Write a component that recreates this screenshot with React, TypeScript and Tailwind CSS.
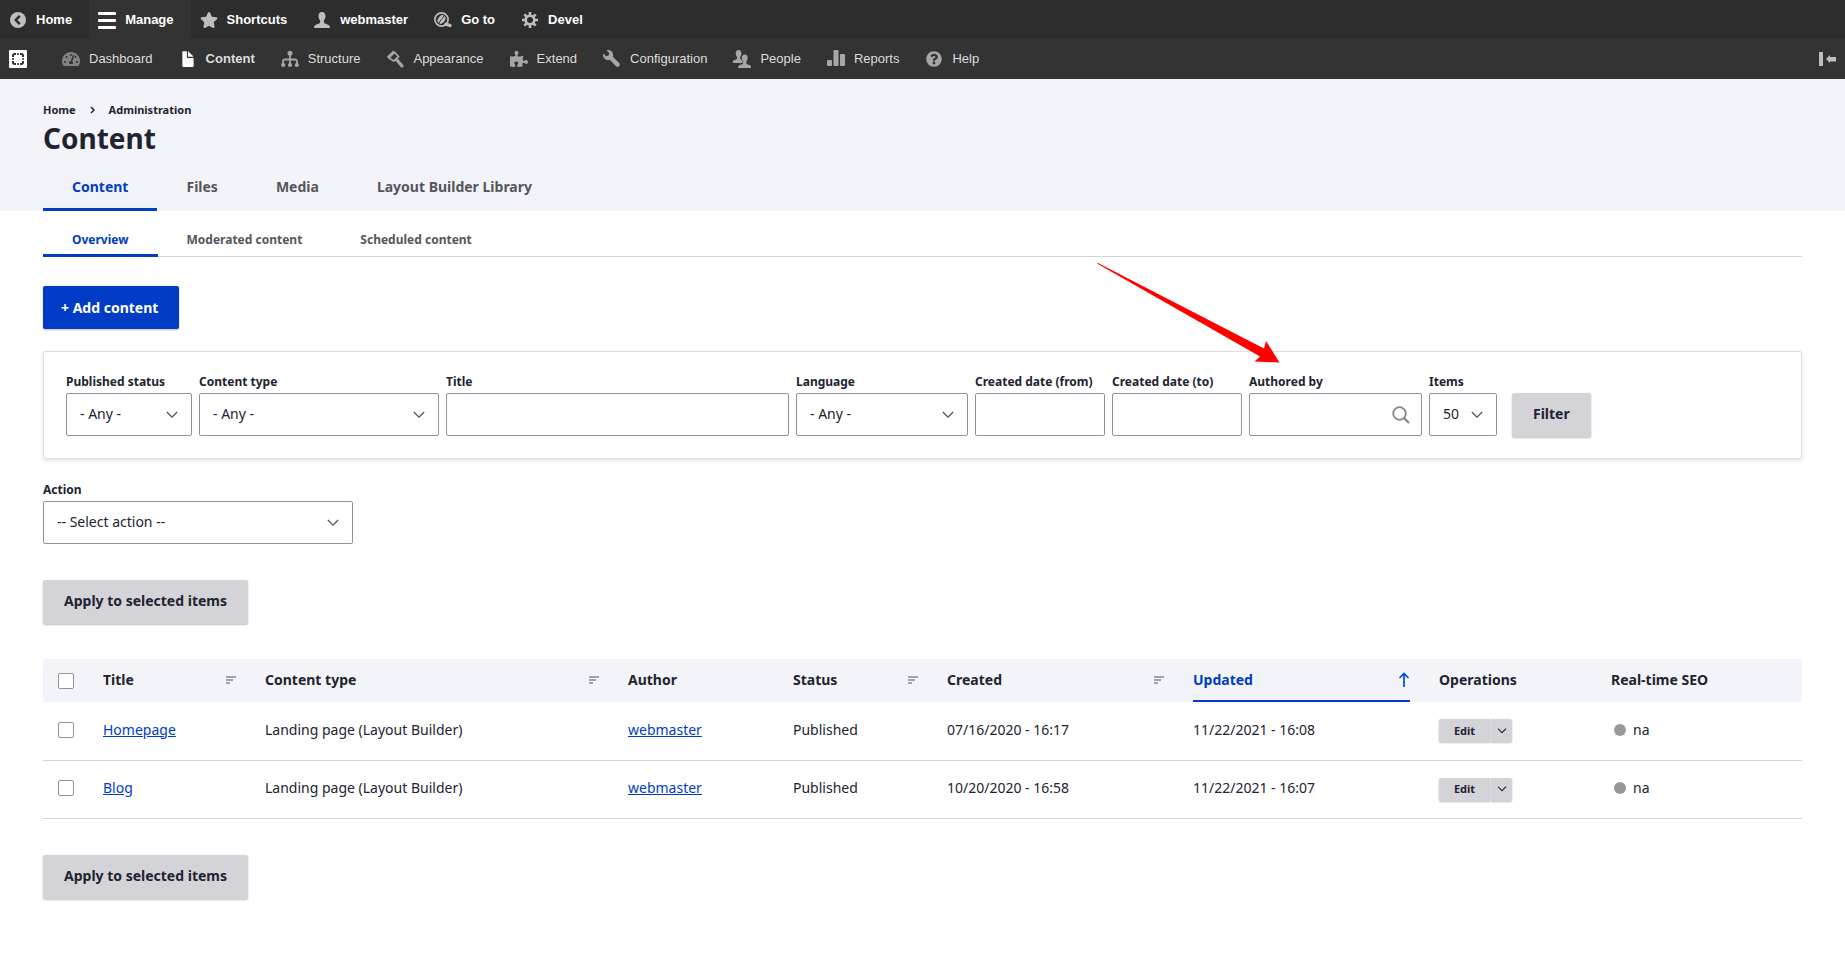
import React, { useId } from "react";
import { FaPuzzlePiece, FaQuestionCircle, FaStar, FaTachometerAlt } from "react-icons/fa";

const BackIcon = () => (
  <svg viewBox="0 0 16 16" className="size-4">
    <circle cx="8" cy="8" r="8" fill="#bebebe" />
    <path d="M9.800 3.800 5.700 8l4.100 4.200" fill="none" stroke="#2d2d2d" strokeWidth="2.400" />
  </svg>
);

const MenuIcon = () => (
  <svg viewBox="0 0 18 18" className="size-[18px]" fill="#fff">
    <rect y="1" width="18" height="3" rx="1" />
    <rect y="8" width="18" height="3" rx="1" />
    <rect y="15" width="18" height="3" rx="1" />
  </svg>
);

const personPath =
  "M8 0C5.500 0 4.400 1.900 4.500 4.300c.1 1.900.8 3.300 1.600 4.200v1.800c-.2 1-1.600 1.500-3 2C1.600 12.800.1 13.400 0 16h16c-.1-2.600-1.600-3.200-3.100-3.700-1.400-.5-2.800-1-3-2V8.500c.8-.9 1.500-2.300 1.600-4.200C11.600 1.900 10.500 0 8 0z";

const PersonIcon = () => (
  <svg viewBox="0 0 16 16" className="size-4" fill="#bebebe">
    <path d={personPath} />
  </svg>
);

const GoToIcon = () => (
  <svg viewBox="0 0 18 16" className="h-4 w-[18px]">
    <circle cx="7.500" cy="7.500" r="6.600" fill="none" stroke="#bebebe" strokeWidth="1.700" />
    <ellipse cx="7.500" cy="7.500" rx="3.400" ry="4.600" fill="#bebebe" transform="rotate(38 7.500 7.500)" />
    <path d="M9.800 4.100C9 6.500 6 8 5.200 10.900" fill="none" stroke="#2d2d2d" strokeWidth="1" />
    <path d="M12 12.200 16 13.500" stroke="#bebebe" strokeWidth="3.400" strokeLinecap="round" />
  </svg>
);

const GearIcon = () => (
  <svg viewBox="0 0 16 16" className="size-4">
    <circle cx="8" cy="8" r="4.300" fill="none" stroke="#bebebe" strokeWidth="2.600" />
    {[0, 45, 90, 135].map((angle) => (
      <path
        key={angle}
        d="M8 0v3M8 13v3"
        stroke="#bebebe"
        strokeWidth="2.600"
        transform={`rotate(${angle} 8 8)`}
      />
    ))}
  </svg>
);

const EditModeIcon = () => (
  <svg viewBox="0 0 18 18" className="size-[18px]">
    <rect width="18" height="18" rx="1" fill="#fff" />
    <path
      d="M4 7V5.500A1.500 1.500 0 0 1 5.500 4H7M11 4h1.500A1.500 1.500 0 0 1 14 5.500V7M14 11v1.500a1.500 1.500 0 0 1-1.500 1.500H11M7 14H5.500A1.500 1.500 0 0 1 4 12.500V11M8.200 4h1.600M8.200 14h1.600M4 8.200v1.600M14 8.200v1.600"
      fill="none"
      stroke="#333"
      strokeWidth="2"
    />
  </svg>
);

const FileIcon = () => (
  <svg viewBox="0 0 16 16" className="size-[18px]" fill="#fff">
    <path d="M12.502 7h-5c-.276 0-.502-.225-.502-.5v-5c0-.275-.225-.5-.5-.5h-3c-.275 0-.5.225-.5.5v13.029c0 .275.225.5.5.5h9.002c.275 0 .5-.225.5-.5v-7.029c0-.275-.225-.5-.5-.5zM8.502 6h4c.275 0 .34-.159.146-.354l-4.293-4.292c-.195-.195-.353-.129-.353.146v4c0 .275.225.5.5.5z" />
  </svg>
);

const StructureIcon = () => (
  <svg viewBox="0 0 18 18" className="size-[18px]" fill="#a6a6a6">
    <path
      d="M9 3v12M2 15v-3.500q0-2 2-2h10q2 0 2 2V15"
      fill="none"
      stroke="#a6a6a6"
      strokeWidth="1.800"
    />
    <circle cx="9" cy="3.200" r="2.500" />
    <circle cx="2.200" cy="15" r="2.100" />
    <circle cx="9" cy="15" r="2.100" />
    <circle cx="15.800" cy="15" r="2.100" />
  </svg>
);

const BrushIcon = () => (
  <svg viewBox="0 0 18 18" className="size-[18px]">
    <path d="M.8 6.800 7.400.4l2.200 2.200L3 9z" fill="#a6a6a6" />
    <path
      d="M8.400 2.200 12.600 6.600 7.800 11.200 2.800 7.800"
      fill="none"
      stroke="#a6a6a6"
      strokeWidth="1.700"
    />
    <path d="M10.500 9.500l5.500 6.500" stroke="#a6a6a6" strokeWidth="3.200" strokeLinecap="round" />
  </svg>
);

const WrenchIcon = () => (
  <svg viewBox="0 0 16 16" className="size-[18px]" fill="#a6a6a6">
    <path d="M14.416 11.586l-.01-.008v-.001l-5.656-5.656c.15-.449.252-.921.252-1.421 0-2.485-2.016-4.500-4.502-4.500-.505 0-.981.102-1.434.255l2.431 2.431-.588 2.196-2.196.588-2.445-2.445c-.162.464-.268.956-.268 1.475 0 2.486 2.014 4.500 4.500 4.500.5 0 .972-.102 1.421-.251l5.667 5.665c.781.781 2.047.781 2.828 0s.781-2.047 0-2.828z" />
  </svg>
);

const PeopleIcon = () => (
  <svg viewBox="0 0 18 18" className="size-[18px]" fill="#a6a6a6">
    <path d={personPath} transform="translate(-1 0) scale(.82)" />
    <path d={personPath} transform="translate(5 4.500) scale(.84)" stroke="#333" strokeWidth="1.600" />
    <path d={personPath} transform="translate(5 4.500) scale(.84)" />
  </svg>
);

const ReportsIcon = () => (
  <svg viewBox="0 0 18 18" className="size-[18px]" fill="#a6a6a6">
    <rect y="10" width="5" height="6" rx="1" />
    <rect x="6.500" width="5" height="16" rx="1" />
    <rect x="13" y="4" width="5" height="12" rx="1" />
  </svg>
);

const CollapseIcon = () => (
  <svg viewBox="0 0 18 14" className="h-3.5 w-[18px]" fill="#bebebe">
    <rect width="4" height="14" />
    <path d="M7 7l4-4v2h6v4.500h-6V11z" />
  </svg>
);

const ChevronDown = ({ className }: { className: string }) => (
  <svg viewBox="0 0 14 9" className={className} fill="none" stroke="currentColor" strokeWidth="1.600">
    <path d="M1 1l6 6 6-6" />
  </svg>
);

const SortIcon = () => (
  <svg viewBox="0 0 10 8" className="h-2 w-2.5" fill="#a3a3ab">
    <rect width="10" height="2" />
    <rect y="3" width="7" height="2" />
    <rect y="6" width="4" height="2" />
  </svg>
);

const toolbarItems = [
  { label: "Home", icon: <BackIcon /> },
  { label: "Manage", icon: <MenuIcon />, active: true },
  { label: "Shortcuts", icon: <FaStar className="size-[18px] text-[#bebebe]" /> },
  { label: "webmaster", icon: <PersonIcon /> },
  { label: "Go to", icon: <GoToIcon /> },
  { label: "Devel", icon: <GearIcon /> },
];

const trayItems = [
  { label: "Dashboard", icon: <FaTachometerAlt className="size-[18px] text-[#828282]" /> },
  { label: "Content", icon: <FileIcon />, active: true },
  { label: "Structure", icon: <StructureIcon /> },
  { label: "Appearance", icon: <BrushIcon /> },
  { label: "Extend", icon: <FaPuzzlePiece className="size-[18px] text-[#a6a6a6]" /> },
  { label: "Configuration", icon: <WrenchIcon /> },
  { label: "People", icon: <PeopleIcon /> },
  { label: "Reports", icon: <ReportsIcon /> },
  { label: "Help", icon: <FaQuestionCircle className="size-4 text-[#a6a6a6]" /> },
];

const Toolbar = () => (
  <header className="font-['Liberation_Sans',Arial,sans-serif] text-[13px]">
    <nav className="flex h-[39px] bg-[#2d2d2d] font-bold text-white" aria-label="Toolbar">
      {toolbarItems.map(({ label, icon, active }) => (
        <a
          key={label}
          href="#"
          className={`flex items-center gap-2 pl-2 pr-[17px] ${active ? "bg-[#333]" : ""}`}
        >
          <span className="flex w-5 justify-center">{icon}</span>
          {label}
        </a>
      ))}
    </nav>
    <nav className="flex h-10 items-center bg-[#333] px-2 text-[#ddd]" aria-label="Administration">
      <button type="button" aria-label="Edit mode" className="mr-[25px] flex w-5 justify-center">
        <EditModeIcon />
      </button>
      {trayItems.map(({ label, icon, active }) => (
        <a
          key={label}
          href="#"
          className={`flex items-center gap-2 pl-2 pr-[17px] ${active ? "font-bold" : ""}`}
        >
          <span className="flex w-5 justify-center">{icon}</span>
          {label}
        </a>
      ))}
      <button type="button" aria-label="Vertical orientation" className="ml-auto">
        <CollapseIcon />
      </button>
    </nav>
  </header>
);

const PageHeader = () => (
  <div className="bg-[#f3f4f9] px-[43px] pt-[21px]">
    <nav aria-label="Breadcrumb" className="flex h-5 items-center gap-3.5 text-[11px] font-bold">
      <a href="#">Home</a>
      <svg viewBox="0 0 5 8" className="h-2 w-[5px]" fill="none" stroke="#222330" strokeWidth="1.500">
        <path d="M1 1l3 3-3 3" />
      </svg>
      <a href="#">Administration</a>
    </nav>
    <h1 className="text-[28px] leading-9 font-bold">Content</h1>
    <nav aria-label="Primary tabs" className="mt-2 flex text-sm font-bold text-[#55565b]">
      {["Content", "Files", "Media", "Layout Builder Library"].map((tab, i) => (
        <a
          key={tab}
          href="#"
          className={`flex h-[47px] items-center border-b-3 px-[29px] pt-0.5 ${
            i === 0 ? "border-[#003cc5] text-[#003cc5]" : "border-transparent"
          }`}
        >
          {tab}
        </a>
      ))}
    </nav>
  </div>
);

const SecondaryTabs = () => (
  <nav
    aria-label="Secondary tabs"
    className="flex text-xs font-bold text-[#55565b] shadow-[inset_0_-1px_0_#d3d4d9]"
  >
    {["Overview", "Moderated content", "Scheduled content"].map((tab, i) => (
      <a
        key={tab}
        href="#"
        className={`flex h-[34px] items-center border-b-3 px-[29px] pt-0.5 ${
          i === 0 ? "border-[#003cc5] text-[#003cc5]" : "border-transparent"
        }`}
      >
        {tab}
      </a>
    ))}
  </nav>
);

type FieldProps = {
  label: string;
  className: string;
  option?: string;
  search?: boolean;
};

const Field = ({ label, className, option, search }: FieldProps) => {
  const id = useId();
  const control =
    "block h-[43px] w-full rounded-xs border border-[#8e929c] bg-white px-[13px] pb-0.5 text-sm";
  return (
    <div className={className}>
      <label htmlFor={id} className="block pt-0.5 text-xs leading-[22px] font-bold whitespace-nowrap">
        {label}
      </label>
      <div className="relative">
        {option ? (
          <>
            <select id={id} className={`${control} appearance-none`}>
              <option>{option}</option>
            </select>
            <ChevronDown className="pointer-events-none absolute top-[18px] right-3.5 h-2 w-3 text-[#55565b]" />
          </>
        ) : (
          <input id={id} type="text" className={control} />
        )}
        {search && (
          <svg
            viewBox="0 0 18 18"
            className="pointer-events-none absolute top-[13px] right-3 size-[18px]"
            fill="none"
            stroke="#868686"
            strokeWidth="1.800"
          >
            <circle cx="7.500" cy="7.500" r="6.300" />
            <path d="M12 12l5 5" strokeWidth="2.200" />
          </svg>
        )}
      </div>
    </div>
  );
};

const GrayButton = ({ children }: { children: React.ReactNode }) => (
  <button
    type="button"
    className="h-11 rounded-xs bg-[#d4d4d8] px-[21px] pb-0.5 text-sm font-bold whitespace-nowrap shadow-[0_1px_2px_rgba(0,0,0,0.25)]"
  >
    {children}
  </button>
);

const Filters = () => (
  <form className="mt-[22px] flex items-start gap-[7px] rounded-xs border border-[#dedfe4] px-[22px] pt-[17px] pb-[22px] shadow-[0_2px_4px_rgba(0,0,0,0.1)]">
    <Field label="Published status" option="- Any -" className="w-[126px]" />
    <Field label="Content type" option="- Any -" className="w-60" />
    <Field label="Title" className="w-[343px]" />
    <Field label="Language" option="- Any -" className="w-[172px]" />
    <Field label="Created date (from)" className="w-[130px]" />
    <Field label="Created date (to)" className="w-[130px]" />
    <Field label="Authored by" search className="w-[173px]" />
    <Field label="Items" option="50" className="w-[68px]" />
    <div className="-mb-1 ml-2 pt-6">
      <GrayButton>Filter</GrayButton>
    </div>
  </form>
);

const columns = [
  { label: "Title", sortable: true, width: "w-[162px]" },
  { label: "Content type", sortable: true, width: "w-[363px]" },
  { label: "Author", width: "w-[165px]" },
  { label: "Status", sortable: true, width: "w-[154px]" },
  { label: "Created", sortable: true, width: "w-[246px]" },
  { label: "Updated", active: true, width: "w-[246px]" },
  { label: "Operations", width: "w-[172px]" },
  { label: "Real-time SEO", width: "" },
];

const rows = [
  { title: "Homepage", created: "07/16/2020 - 16:17", updated: "11/22/2021 - 16:08" },
  { title: "Blog", created: "10/20/2020 - 16:58", updated: "11/22/2021 - 16:07" },
];

const Checkbox = ({ label }: { label: string }) => (
  <input
    type="checkbox"
    aria-label={label}
    className="block size-4 appearance-none rounded-xs border border-[#8e929c] bg-white"
  />
);

const ContentTable = () => (
  <table className="mt-[35px] w-full table-fixed text-left text-sm">
    <thead className="bg-[#f3f4f9]">
      <tr className="h-[43px]">
        <th className="w-[45px] pl-[15px]">
          <Checkbox label="Select all rows" />
        </th>
        {columns.map(({ label, sortable, active, width }) => (
          <th key={label} className={`py-0 pr-3.5 pl-[15px] font-bold ${width}`}>
            <a
              href="#"
              className={`flex h-[43px] items-center justify-between pb-0.5 ${
                active ? "text-[#003cc5] shadow-[inset_0_-2px_0_#003cc5]" : ""
              }`}
            >
              {label}
              {sortable && <SortIcon />}
              {active && (
                <svg viewBox="0 0 12 15" className="h-[15px] w-3" fill="none" stroke="#0048e0" strokeWidth="1.700">
                  <path d="M6 15V1.500M1.500 6 6 1.500 10.500 6" />
                </svg>
              )}
            </a>
          </th>
        ))}
      </tr>
    </thead>
    <tbody>
      {rows.map(({ title, created, updated }) => (
        <tr key={title} className="h-[58px] border-b border-[#d3d4d9]">
          <td className="pb-0.5 pl-[15px]">
            <Checkbox label={`Select ${title}`} />
          </td>
          <td className="px-[15px] pb-0.5">
            <a href="#" className="text-[#003cc5] underline">
              {title}
            </a>
          </td>
          <td className="px-[15px] pb-0.5">Landing page (Layout Builder)</td>
          <td className="px-[15px] pb-0.5">
            <a href="#" className="text-[#003cc5] underline">
              webmaster
            </a>
          </td>
          <td className="px-[15px] pb-0.5">Published</td>
          <td className="px-[15px] pb-0.5">{created}</td>
          <td className="px-[15px] pb-0.5">{updated}</td>
          <td className="px-[15px]">
            <div className="flex gap-px text-[11px] font-bold">
              <button
                type="button"
                className="h-[23px] w-[51px] rounded-l-xs bg-[#d4d4d8] shadow-[0_1px_2px_rgba(0,0,0,0.25)]"
              >
                Edit
              </button>
              <button
                type="button"
                aria-label="List additional actions"
                className="flex h-[23px] w-[21px] items-center justify-center rounded-r-xs bg-[#d4d4d8] shadow-[0_1px_2px_rgba(0,0,0,0.25)]"
              >
                <ChevronDown className="h-1.5 w-2.5" />
              </button>
            </div>
          </td>
          <td className="px-[15px] pb-0.5">
            <span className="flex items-center gap-[7px] pl-[3px]">
              <span className="size-3 rounded-full bg-[#999]" />
              na
            </span>
          </td>
        </tr>
      ))}
    </tbody>
  </table>
);

export default function App() {
  return (
    <div className="min-h-screen bg-white font-['Noto_Sans','Open_Sans',sans-serif] text-[#222330]">
      <Toolbar />
      <PageHeader />
      <main className="relative px-[43px] pt-3 pb-19">
        <SecondaryTabs />
        <button
          type="button"
          className="mt-[29px] flex h-[43px] items-center rounded-xs bg-[#003cc5] pr-[21px] pl-[18px] text-sm font-bold text-white shadow-[0_1px_2px_rgba(0,0,0,0.25)]"
        >
          + Add content
        </button>
        <Filters />
        <div className="mt-[18px] mb-9">
          <Field label="Action" option="-- Select action --" className="w-[310px]" />
        </div>
        <GrayButton>Apply to selected items</GrayButton>
        <ContentTable />
        <div className="mt-9">
          <GrayButton>Apply to selected items</GrayButton>
        </div>

        {/* Callout arrow pointing at the author filter */}
        <svg
          viewBox="0 0 184 100"
          className="pointer-events-none absolute top-[52px] left-[1096px] h-[100px] w-[184px]"
          fill="#f00"
        >
          <path d="M1 .5 2 0 168 85.500 170 78 183.500 99.500 158.500 98.500 164 93.500z" />
        </svg>
      </main>
    </div>
  );
}
